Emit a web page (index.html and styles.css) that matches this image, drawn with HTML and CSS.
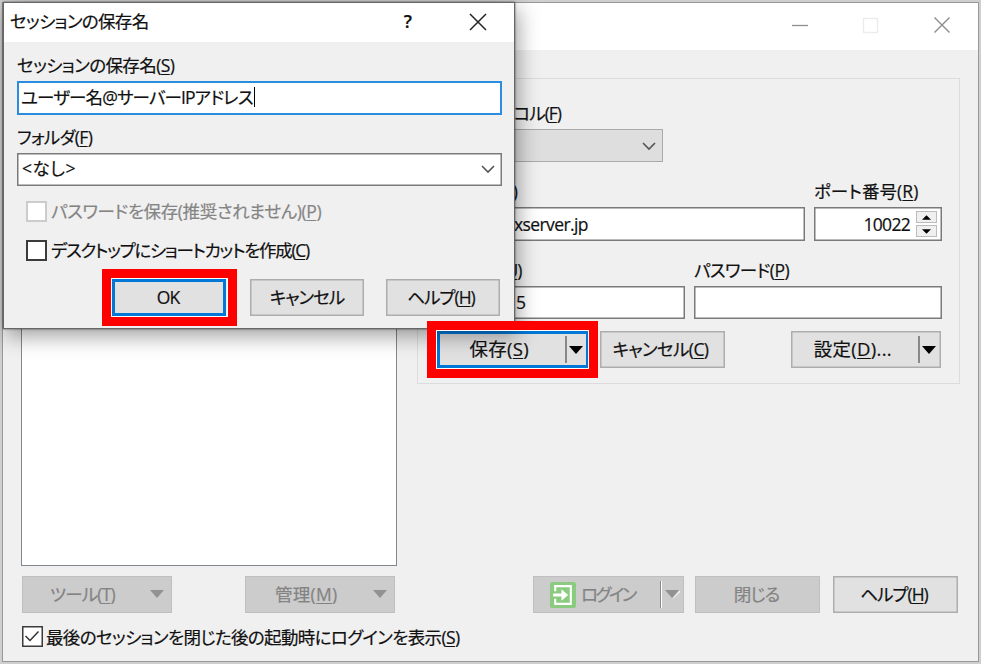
FILE: index.html
```
<!DOCTYPE html>
<html lang="ja">
<head>
<meta charset="utf-8">
<title>セッションの保存名</title>
<link rel="stylesheet" href="styles.css">
</head>
<body>
<main class="window">
  <header class="window-title">
    <svg width="160" height="20" viewBox="0 0 160 20" fill="none">
      <path d="M2 11.5h16" stroke="#8c8c8c" stroke-width="1.3"/>
      <rect x="73.500" y="4.500" width="14" height="14" stroke="#ececec" stroke-width="1.4"/>
      <path d="M144.500 3.500l15 15m0-15l-15 15" stroke="#8c8c8c" stroke-width="1.4"/>
    </svg>
  </header>
  <div class="columns">
    <div class="site-list"></div>
    <section class="group">
      <div class="field protocol">
        <label class="t-protocol">転送プロトコル(<u>F</u>)</label>
        <div class="select disabled"><svg class="chevron" viewBox="0 0 14 9"><path d="M1 1l6 6 6-6"/></svg></div>
      </div>
      <div class="row host-row">
        <div class="field"><label class="t-host">ホスト名(<u>H</u>)</label><div class="input host">xserver.jp</div></div>
        <div class="field"><label class="t-port">ポート番号(<u>R</u>)</label>
          <div class="input port"><span>10022</span>
            <div class="spin">
              <i><svg viewBox="0 0 8 4"><path d="M0 4l4-4 4 4z"/></svg></i>
              <i><svg viewBox="0 0 8 4"><path d="M0 0l4 4 4-4z"/></svg></i>
            </div>
          </div>
        </div>
      </div>
      <div class="row user-row">
        <div class="field"><label class="t-user">ユーザ名(<u>U</u>)</label><div class="input user">5</div></div>
        <div class="field"><label class="t-pass">パスワード(<u>P</u>)</label><div class="input"></div></div>
      </div>
      <div class="row actions">
        <div class="button split default save"><span class="t-save">保存(<u>S</u>)</span><b></b><svg class="arrow" viewBox="0 0 14 8"><path d="M0 0h14l-7 8z"/></svg></div>
        <div class="button cancel"><span class="t-cancel-c">キャンセル(<u>C</u>)</span></div>
        <div class="button split settings"><span class="t-settings">設定(<u>D</u>)...</span><b></b><svg class="arrow" viewBox="0 0 14 8"><path d="M0 0h14l-7 8z"/></svg></div>
      </div>
    </section>
  </div>
  <div class="toolbar">
    <div class="button off menu tools"><span class="t-tools">ツール(<u>T</u>)</span><svg class="arrow" viewBox="0 0 14 8"><path d="M0 0h14l-7 8z"/></svg></div>
    <div class="button off menu manage"><span class="t-manage">管理(<u>M</u>)</span><svg class="arrow" viewBox="0 0 14 8"><path d="M0 0h14l-7 8z"/></svg></div>
    <div class="button off split login">
      <svg class="login-icon" viewBox="0 0 25 25"><rect width="25" height="25" rx="2.500" fill="#8acb7f"/><path d="M5 9V4h15v17H5v-5" fill="none" stroke="#fff" stroke-width="2"/><path d="M3 11h8V7l6.500 5.500L11 18v-4H3z" fill="#fff"/></svg>
      <span class="t-login">ログイン</span><b></b>
      <svg class="arrow" viewBox="0 0 15 9"><path d="M7.500 9l7-8h.5v1L8 9z" fill="#fff"/><path d="M0 0h14l-7 8z"/></svg>
    </div>
    <div class="button off close"><span class="t-close">閉じる</span></div>
    <div class="button help"><span class="t-help">ヘルプ(<u>H</u>)</span></div>
  </div>
  <div class="check startup"><i><svg viewBox="0 0 18 18"><path d="M2.500 9l4.500 4.500 8.500-9" fill="none" stroke="#333" stroke-width="1.5"/></svg></i><span class="t-startup">最後のセッションを閉じた後の起動時にログインを表示(<u>S</u>)</span></div>
</main>

<section class="dialog">
  <header class="dialog-title">
    <span class="t-title">セッションの保存名</span>
    <span class="question">?</span>
    <svg width="18" height="18" viewBox="0 0 18 18"><path d="M1 1l16 16m0-16L1 17" fill="none" stroke="#222" stroke-width="1.5"/></svg>
  </header>
  <div class="dialog-body">
    <label class="t-name">セッションの保存名(<u>S</u>)</label>
    <div class="input focused"><span class="t-value">ユーザー名@サーバーIPアドレス</span><em></em></div>
    <label class="t-folder">フォルダ(<u>F</u>)</label>
    <div class="select"><span class="t-none">&lt;なし&gt;</span><svg class="chevron" viewBox="0 0 14 9"><path d="M1 1l6 6 6-6"/></svg></div>
    <div class="check off-check"><i></i><span class="t-savepass">パスワードを保存(推奨されません)(<u>P</u>)</span></div>
    <div class="check"><i></i><span class="t-shortcut">デスクトップにショートカットを作成(<u>C</u>)</span></div>
    <div class="dialog-buttons">
      <div class="button default"><span>OK</span></div>
      <div class="button"><span class="t-cancel">キャンセル</span></div>
      <div class="button"><span class="t-help">ヘルプ(<u>H</u>)</span></div>
    </div>
  </div>
</section>
<div class="marker marker-ok"></div>
<div class="marker marker-save"></div>
</body>
</html>
```
FILE: styles.css
```
* { box-sizing: border-box; }
body {
  margin: 0; width: 981px; height: 664px; overflow: hidden; position: relative;
  background: #cfcfcf; color: #111; padding: 2px;
  font: 17.500px/20px "Open Sans", "Noto Sans CJK JP", sans-serif;
  font-feature-settings: "palt"; letter-spacing: -1px;
  -webkit-text-stroke: .2px currentColor;
}
u { text-underline-offset: 2px; text-decoration-thickness: 1px; }
label, span { white-space: nowrap; }
label { display: block; height: 20px; }
.window { width: 977px; height: 660px; border: 1px solid #999; background: #f0f0f0; }
.window-title { height: 47px; background: #fff; padding: 11px 0 0 787px; }
.window-title svg { display: block; }
.columns { display: flex; gap: 20px; padding-left: 18px; height: 516px; }
.site-list { width: 376px; height: 496px; margin-top: 20px; border: 1px solid #828790; background: #fff; }
.group { width: 543px; height: 306px; margin-top: 28px; border: 1px solid #dcdcdc; padding: 24px 17px 0 19px; }
.row { display: flex; }
.input, .select {
  display: flex; align-items: center; height: 34px; border: 1px solid #7a7a7a; background: #fff;
}
.input, .select { box-shadow: inset 0 0 0 .5px #7a7a7a; }
.select { justify-content: space-between; padding-right: 6px; }
.select.disabled { background: #dedede; border-color: #aaa; box-shadow: none; justify-content: flex-end; }
.chevron { width: 14px; height: 9px; fill: none; stroke: #555; stroke-width: 1.6; }
.protocol { width: 226px; }
.protocol label { margin-bottom: 6px; }
.protocol .select { height: 33px; padding-top: 2px; }
.host-row { gap: 9px; margin-top: 20px; }
.host-row label, .user-row label { margin-bottom: 6px; margin-top: -1px; }
.host { width: 368px; padding: 0 0 1px 76px; letter-spacing: -.6px; }
.port { width: 128px; justify-content: flex-end; padding-right: 4px; gap: 6px; }
.port span { letter-spacing: -.7px; padding-bottom: 1px; }
.t-port { letter-spacing: .1px; }
.t-pass { letter-spacing: -.6px; }
.spin { width: 21px; height: 26px; display: grid; gap: 2px; }
.spin i { border: 1px solid #bbb; background: #f0f0f0; display: grid; place-items: center; }
.spin svg { width: 9px; height: 5px; }
.user-row { gap: 9px; margin-top: 20px; }
.user-row .field { width: 248px; }
.user-row .input { height: 33px; }
.user { padding: 0 0 1px 78px; }
.actions { margin-top: 12px; }
.button {
  display: flex; align-items: center; justify-content: center; height: 37px;
  border: 1px solid #adadad; box-shadow: inset 0 0 0 .5px #adadad; background: #e1e1e1;
}
.button > span { padding-bottom: 2px; }
.button.default { border: 3px solid #0078d7; box-shadow: none; }
.button.off { background: #ccc; border-color: #bfbfbf; box-shadow: none; color: #838383; }
.button.split > b { width: 2px; height: 27px; background: #888; }
.arrow { width: 14px; height: 8px; fill: #000; flex: none; }
.off .arrow { fill: #929292; }
.save { width: 152px; justify-content: flex-end; padding-right: 3px; }
.save span { margin-right: 36px; font-size: 18.500px; letter-spacing: .3px; }
.save b, .settings b { margin-right: 2px; }
.cancel { width: 125px; margin-left: 11px; padding-right: 4px; }
.t-cancel-c { letter-spacing: -.6px; }
.settings { width: 150px; margin-left: 66px; justify-content: flex-end; padding-right: 4px; }
.settings span { margin-right: 26px; font-size: 18.500px; letter-spacing: .3px; }
.toolbar { display: flex; padding-left: 19px; margin-top: 10px; }
.toolbar .button { height: 37px; }
.menu { width: 150px; justify-content: space-between; padding: 0 7px 0 27px; }
.menu .arrow { margin-bottom: 2px; }
.manage { margin-left: 73px; padding-left: 29px; }
.t-tools { letter-spacing: -.8px; }
.t-manage { letter-spacing: .3px; }
.login { width: 151px; margin-left: 138px; justify-content: flex-start; padding-left: 16px; }
.login-icon { width: 26px; height: 26px; margin-right: 5px; }
.login span { width: 79px; letter-spacing: -2.500px; }
.login b { margin-right: 3px; border-right: 1px solid #fff; }
.login .arrow { width: 15px; height: 9px; }
.close { width: 125px; margin-left: 11px; padding-right: 2px; }
.help { width: 125px; margin-left: 13px; padding-right: 3px; }
.check { display: flex; align-items: center; height: 21px; }
.check i { width: 21px; height: 21px; border: 2px solid #3b3b3b; background: #fff; flex: none; }
.check i svg { display: block; width: 18px; height: 18px; }
.check span { margin: 0 0 2px 4px; }
.off-check { color: #858585; }
.off-check i { border-color: #ccc; }
.startup { margin: 13px 0 0 19px; }
.startup i { border-width: 1.500px; box-shadow: inset 0 0 0 .5px #3b3b3b; }
.check .t-startup { letter-spacing: -.64px; margin: 0 0 0 3px; }
.check .t-savepass { letter-spacing: -.4px; }
.check .t-shortcut { letter-spacing: -1.300px; }
.dialog {
  position: absolute; left: 3px; top: 2px; width: 512px; height: 327px;
  background: #f0f0f0; border: 1px solid #666; box-shadow: 3px 7px 20px rgba(0,0,0,.38), 0 0 2px rgba(0,0,0,.6);
}
.dialog-title { display: flex; align-items: center; height: 39px; padding: 0 27px 0 6px; background: #fff; }
.dialog-title svg { margin-bottom: 2px; }
.dialog-title span { padding-bottom: 4px; }
.t-title { letter-spacing: -.67px; }
.question { margin-left: auto; margin-right: 58px; font-weight: 600; font-size: 18px; }
.dialog-body { padding: 13px 12px 0 13px; }
.t-name { letter-spacing: -.6px; }
.t-folder { letter-spacing: -.7px; }
.t-none { letter-spacing: .5px; }
.t-value { letter-spacing: -.85px; margin-left: -1px; }
.focused .t-value, .t-none { padding-bottom: 3px; }
.focused { border: 2px solid #2b8de0; margin: 6px 0 12px; padding-left: 3px; box-shadow: none; }
.focused em { width: 1px; height: 20px; background: #000; margin: 0 0 2px 1px; }
.dialog .select { height: 33px; margin-top: 6px; padding-left: 4px; }
.dialog .check { margin: 15px 0 0 9px; }
.dialog .check + .check { margin-top: 18px; }
.dialog-buttons { display: flex; gap: 22px; margin: 18px 0 0 95px; }
.dialog-buttons .button { width: 114px; }
.dialog-buttons .button:first-child { margin-right: 2px; padding-right: 2px; }
.dialog-buttons .button:last-child { padding-right: 4px; }
.marker { position: absolute; border: 9px solid #f00; box-shadow: inset 0 0 0 1px #fff; }
.marker-ok { left: 102px; top: 269px; width: 135px; height: 57px; }
.marker-save { left: 427px; top: 321px; width: 171px; height: 57px; }
```
